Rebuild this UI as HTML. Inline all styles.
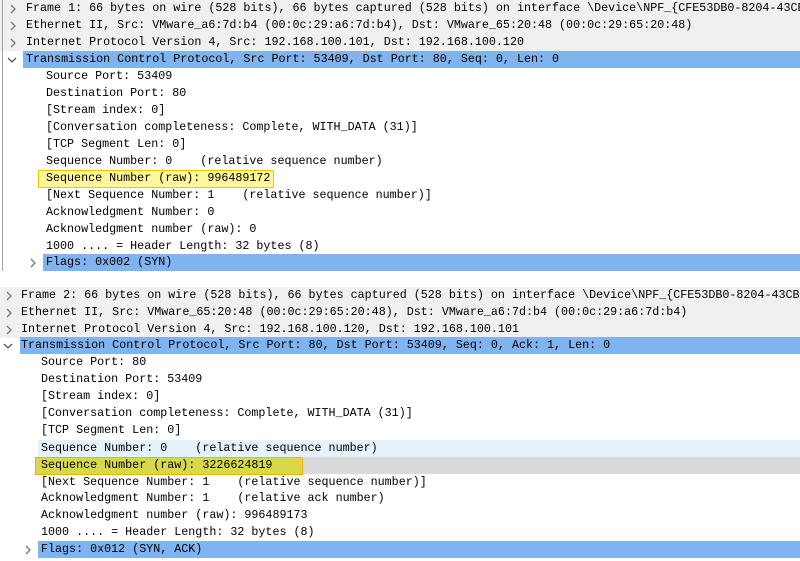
<!DOCTYPE html>
<html><head><style>
body{margin:0;width:800px;height:561px;background:#fff;overflow:hidden;position:relative;font-family:"Liberation Mono",monospace;font-size:11.7px;color:#000}
.r{position:absolute;left:0;right:0;height:17px;line-height:17px;white-space:pre}
.t{position:absolute;top:0}
.b{position:absolute;height:17px;background:#7fb4f0;right:0}
.ar{position:absolute;top:4px}
</style></head><body>
<div style="position:absolute;left:0;top:0;width:800px;height:51px;background:#f0f0f0"></div>
<div style="position:absolute;left:2px;top:0;width:1px;height:271px;background:#a0a0a0"></div>
<div class="b" style="left:23px;top:51px"></div>
<div class="b" style="left:43px;top:254px"></div>

<div class="r" style="top:0"><svg class="ar" style="left:9px" width="8" height="10"><path d="M2 1L6 5L2 9" fill="none" stroke="#777" stroke-width="1.3"/></svg><span class="t" style="left:26px">Frame 1: 66 bytes on wire (528 bits), 66 bytes captured (528 bits) on interface \Device\NPF_{CFE53DB0-8204-43CB</span></div>
<div class="r" style="top:17px"><svg class="ar" style="left:9px" width="8" height="10"><path d="M2 1L6 5L2 9" fill="none" stroke="#777" stroke-width="1.3"/></svg><span class="t" style="left:26px">Ethernet II, Src: VMware_a6:7d:b4 (00:0c:29:a6:7d:b4), Dst: VMware_65:20:48 (00:0c:29:65:20:48)</span></div>
<div class="r" style="top:34px"><svg class="ar" style="left:9px" width="8" height="10"><path d="M2 1L6 5L2 9" fill="none" stroke="#777" stroke-width="1.3"/></svg><span class="t" style="left:26px">Internet Protocol Version 4, Src: 192.168.100.101, Dst: 192.168.100.120</span></div>
<div class="r" style="top:51px"><svg class="ar" style="left:7px;top:5px" width="10" height="8"><path d="M1 2L5 6L9 2" fill="none" stroke="#555" stroke-width="1.3"/></svg><span class="t" style="left:26px">Transmission Control Protocol, Src Port: 53409, Dst Port: 80, Seq: 0, Len: 0</span></div>
<div class="r" style="top:68px"><span class="t" style="left:46px">Source Port: 53409</span></div>
<div class="r" style="top:85px"><span class="t" style="left:46px">Destination Port: 80</span></div>
<div class="r" style="top:102px"><span class="t" style="left:46px">[Stream index: 0]</span></div>
<div class="r" style="top:119px"><span class="t" style="left:46px">[Conversation completeness: Complete, WITH_DATA (31)]</span></div>
<div class="r" style="top:136px"><span class="t" style="left:46px">[TCP Segment Len: 0]</span></div>
<div class="r" style="top:153px"><span class="t" style="left:46px">Sequence Number: 0    (relative sequence number)</span></div>
<div style="position:absolute;left:38px;top:170px;width:234px;height:16px;background:#fff79a;border:1px solid #f0c800"></div>
<div class="r" style="top:170px"><span class="t" style="left:46px">Sequence Number (raw): 996489172</span></div>
<div class="r" style="top:187px"><span class="t" style="left:46px">[Next Sequence Number: 1    (relative sequence number)]</span></div>
<div class="r" style="top:204px"><span class="t" style="left:46px">Acknowledgment Number: 0</span></div>
<div class="r" style="top:221px"><span class="t" style="left:46px">Acknowledgment number (raw): 0</span></div>
<div class="r" style="top:238px"><span class="t" style="left:46px">1000 .... = Header Length: 32 bytes (8)</span></div>
<div class="r" style="top:254px"><svg class="ar" style="left:29px" width="8" height="10"><path d="M2 1L6 5L2 9" fill="none" stroke="#777" stroke-width="1.3"/></svg><span class="t" style="left:46px">Flags: 0x002 (SYN)</span></div>

<div style="position:absolute;left:0;top:287px;width:800px;height:51px;background:#f0f0f0"></div>
<div class="b" style="left:20px;top:337px"></div>
<div style="position:absolute;left:38px;top:440px;right:0;height:17px;background:#e5f1fb"></div>
<div style="position:absolute;left:38px;top:457px;right:0;height:17px;background:#d9d9d9"></div>
<div style="position:absolute;left:35px;top:457px;width:266px;height:16px;background:#d8d84a;border:1px solid #e8b800"></div>
<div class="b" style="left:38px;top:541px"></div>

<div class="r" style="top:287px"><svg class="ar" style="left:5px" width="8" height="10"><path d="M2 1L6 5L2 9" fill="none" stroke="#777" stroke-width="1.3"/></svg><span class="t" style="left:21px">Frame 2: 66 bytes on wire (528 bits), 66 bytes captured (528 bits) on interface \Device\NPF_{CFE53DB0-8204-43CB-</span></div>
<div class="r" style="top:304px"><svg class="ar" style="left:5px" width="8" height="10"><path d="M2 1L6 5L2 9" fill="none" stroke="#777" stroke-width="1.3"/></svg><span class="t" style="left:21px">Ethernet II, Src: VMware_65:20:48 (00:0c:29:65:20:48), Dst: VMware_a6:7d:b4 (00:0c:29:a6:7d:b4)</span></div>
<div class="r" style="top:321px"><svg class="ar" style="left:5px" width="8" height="10"><path d="M2 1L6 5L2 9" fill="none" stroke="#777" stroke-width="1.3"/></svg><span class="t" style="left:21px">Internet Protocol Version 4, Src: 192.168.100.120, Dst: 192.168.100.101</span></div>
<div class="r" style="top:337px"><svg class="ar" style="left:3px;top:5px" width="10" height="8"><path d="M1 2L5 6L9 2" fill="none" stroke="#555" stroke-width="1.3"/></svg><span class="t" style="left:21px">Transmission Control Protocol, Src Port: 80, Dst Port: 53409, Seq: 0, Ack: 1, Len: 0</span></div>
<div class="r" style="top:354px"><span class="t" style="left:41px">Source Port: 80</span></div>
<div class="r" style="top:371px"><span class="t" style="left:41px">Destination Port: 53409</span></div>
<div class="r" style="top:388px"><span class="t" style="left:41px">[Stream index: 0]</span></div>
<div class="r" style="top:405px"><span class="t" style="left:41px">[Conversation completeness: Complete, WITH_DATA (31)]</span></div>
<div class="r" style="top:422px"><span class="t" style="left:41px">[TCP Segment Len: 0]</span></div>
<div class="r" style="top:440px"><span class="t" style="left:41px">Sequence Number: 0    (relative sequence number)</span></div>
<div class="r" style="top:457px"><span class="t" style="left:41px">Sequence Number (raw): 3226624819</span></div>
<div class="r" style="top:474px"><span class="t" style="left:41px">[Next Sequence Number: 1    (relative sequence number)]</span></div>
<div class="r" style="top:490px"><span class="t" style="left:41px">Acknowledgment Number: 1    (relative ack number)</span></div>
<div class="r" style="top:507px"><span class="t" style="left:41px">Acknowledgment number (raw): 996489173</span></div>
<div class="r" style="top:524px"><span class="t" style="left:41px">1000 .... = Header Length: 32 bytes (8)</span></div>
<div class="r" style="top:541px"><svg class="ar" style="left:24px" width="8" height="10"><path d="M2 1L6 5L2 9" fill="none" stroke="#777" stroke-width="1.3"/></svg><span class="t" style="left:41px">Flags: 0x012 (SYN, ACK)</span></div>
</body></html>
